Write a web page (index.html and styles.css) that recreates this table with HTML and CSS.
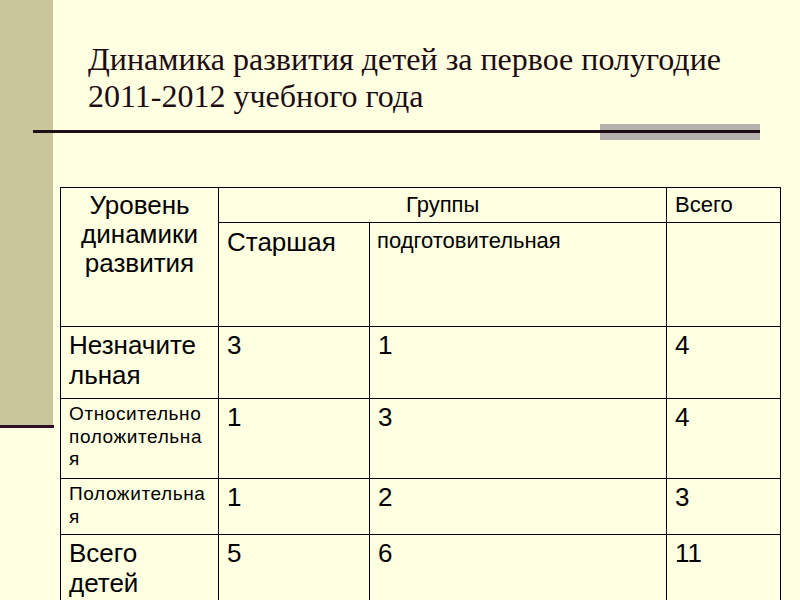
FILE: index.html
```html
<!DOCTYPE html>
<html lang="ru">
<head>
<meta charset="utf-8">
<link rel="stylesheet" href="styles.css">
</head>
<body>
<div class="slide">
  <aside class="side">
    <div class="side-band"></div>
    <div class="side-line"></div>
  </aside>
  <main class="content">
    <h1 class="title">Динамика развития детей за первое полугодие<br>2011-2012 учебного года</h1>
    <div class="rule">
      <div class="rule-line"></div>
      <div class="rule-box"></div>
    </div>
    <table class="grid">
      <colgroup>
        <col class="c1"><col class="c2"><col class="c3"><col class="c4">
      </colgroup>
      <tr class="r-head1">
        <td rowspan="2" class="lvl">Уровень динамики развития</td>
        <td colspan="2" class="groups">Группы</td>
        <td class="small">Всего</td>
      </tr>
      <tr class="r-head2">
        <td class="big">Старшая</td>
        <td class="tiny">подготовительная</td>
        <td></td>
      </tr>
      <tr class="r1">
        <td class="big">Незначите льная</td>
        <td class="big">3</td>
        <td class="big">1</td>
        <td class="big">4</td>
      </tr>
      <tr class="r2">
        <td class="mid">Относительно положительна я</td>
        <td class="big">1</td>
        <td class="big">3</td>
        <td class="big">4</td>
      </tr>
      <tr class="r3">
        <td class="mid">Положительна я</td>
        <td class="big">1</td>
        <td class="big">2</td>
        <td class="big">3</td>
      </tr>
      <tr class="r4">
        <td class="big">Всего детей</td>
        <td class="big">5</td>
        <td class="big">6</td>
        <td class="big">11</td>
      </tr>
    </table>
  </main>
</div>
</body>
</html>
```

FILE: styles.css
```css
html, body {
  margin: 0;
  padding: 0;
  background: #ffffe1;
}
.slide {
  width: 800px;
  height: 600px;
  overflow: hidden;
  display: flex;
  background: #ffffe1;
}
.side {
  width: 54px;
  flex: none;
  display: flex;
  flex-direction: column;
}
.side-band {
  width: 53px;
  height: 425px;
  background: #c9c799;
}
.side-line {
  width: 54px;
  height: 3px;
  background: #2d0f2a;
}
.content {
  flex: 1;
  display: flex;
  flex-direction: column;
}
.title {
  margin: 41px 0 0 34px;
  font-family: "Liberation Serif", "Times New Roman", serif;
  font-weight: normal;
  font-size: 32px;
  line-height: 37px;
  color: #1c0b12;
  white-space: nowrap;
}
.rule {
  margin: 9px 0 0 -21px;
  width: 727px;
  height: 16px;
  display: flex;
  align-items: center;
  justify-content: flex-end;
  position: relative;
}
.rule-box {
  width: 160px;
  height: 16px;
  background: #b3b0ad;
}
.rule-line {
  position: absolute;
  left: 0;
  right: 0;
  top: 6px;
  height: 3px;
  background: #1e0e16;
}
.grid {
  margin: 47px 0 0 6px;
  border-collapse: collapse;
  table-layout: fixed;
  width: 720px;
  font-family: "Liberation Sans", Arial, sans-serif;
  color: #000;
}
.c1 { width: 158px; }
.c2 { width: 151px; }
.c3 { width: 297px; }
.c4 { width: 114px; }
.grid td {
  border: 1.5px solid #000;
  vertical-align: top;
  padding: 3px 8px 0 8px;
  text-align: left;
}
.r-head1 { height: 35px; }
.r-head2 { height: 104px; }
.r1 { height: 72px; }
.r2 { height: 80px; }
.r3 { height: 56px; }
.r4 { height: 80px; }
.lvl {
  font-size: 26px;
  line-height: 29px;
  text-align: center !important;
  padding: 3px 4px 0 4px !important;
}
.groups {
  font-size: 22px;
  line-height: 26px;
  padding-left: 187px !important;
  padding-top: 4px !important;
}
.small {
  font-size: 22px;
  line-height: 26px;
  padding-top: 4px !important;
}
.big {
  font-size: 26px;
  line-height: 30px;
}
.r-head2 .big {
  padding-top: 4px;
}
.tiny {
  font-size: 22px;
  line-height: 26px;
  padding-top: 5px !important;
  padding-left: 7px !important;
}
.mid {
  font-size: 19px;
  line-height: 22.5px;
  letter-spacing: 0.6px;
  padding-top: 4px !important;
}
```
